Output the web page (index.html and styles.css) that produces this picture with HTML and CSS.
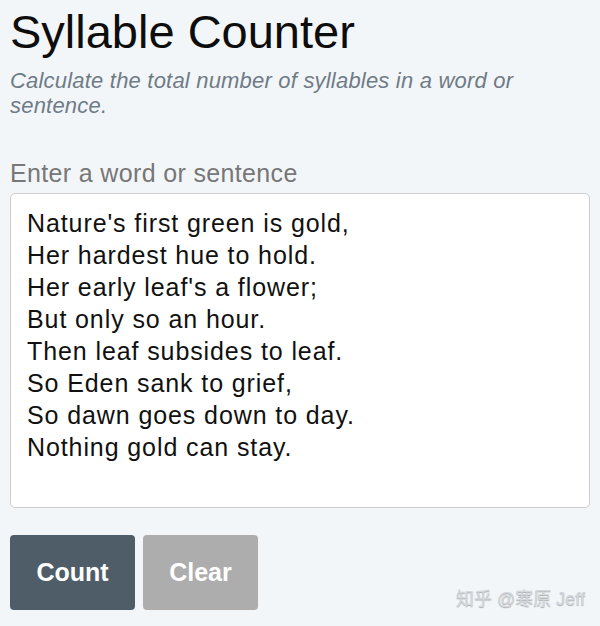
FILE: index.html
```html
<!DOCTYPE html>
<html lang="en">
<head>
  <meta charset="UTF-8" />
  <title>Syllable Counter</title>
  <link rel="stylesheet" href="styles.css">
</head>
<body>
  <div class="page">
    <h1 class="title">Syllable Counter</h1>
    <p class="subtitle">Calculate the total number of syllables in a word or sentence.</p>

    <label class="field-label" for="input">Enter a word or sentence</label>
    <textarea id="input" class="input-box">Nature's first green is gold,
Her hardest hue to hold.
Her early leaf's a flower;
But only so an hour.
Then leaf subsides to leaf.
So Eden sank to grief,
So dawn goes down to day.
Nothing gold can stay.</textarea>

    <div class="actions">
      <button class="btn btn-count">Count</button>
      <button class="btn btn-clear">Clear</button>
      <span class="watermark">知乎 @寒原 Jeff</span>
    </div>
  </div>
</body>
</html>
```

FILE: styles.css
```css
* { box-sizing: border-box; margin: 0; padding: 0; }
body {
  background: #f3f6f9;
  color: #111;
  font-family: 'Liberation Sans', Arial, sans-serif;
}
.page {
  padding: 6px 10px 0 10px;
  display: flex;
  flex-direction: column;
}
.title {
  font-size: 47px;
  font-weight: 400;
  line-height: 52px;
  color: #0d0d0d;
}
.subtitle {
  margin-top: 10px;
  font-size: 22px;
  font-style: italic;
  line-height: 25px;
  letter-spacing: 0.2px;
  color: #6f7b86;
  padding-right: 60px;
}
.field-label {
  margin-top: 41px;
  font-size: 25px;
  line-height: 28px;
  letter-spacing: 0.35px;
  color: #777;
}
.input-box {
  margin-top: 6px;
  width: 100%;
  height: 315px;
  padding: 13px 16px 10px;
  border: 1.5px solid #cfcfcf;
  border-radius: 5px;
  background: #fff;
  font-family: 'Liberation Sans', Arial, sans-serif;
  font-size: 25px;
  line-height: 32px;
  letter-spacing: 0.9px;
  color: #111;
  resize: none;
  overflow: hidden;
}
.actions {
  margin-top: 27px;
  display: flex;
  gap: 8px;
  align-items: stretch;
}
.btn {
  height: 75px;
  border: none;
  border-radius: 4px;
  color: #fff;
  font-family: 'Liberation Sans', Arial, sans-serif;
  font-size: 25px;
  font-weight: 700;
}
.btn-count { width: 125px; background: #4f5d69; }
.btn-clear { width: 115px; background: #adadad; }
.watermark {
  margin-left: auto;
  align-self: flex-end;
  margin-bottom: 0;
  margin-right: 5px;
  font-family: 'Liberation Sans', 'Noto Sans CJK SC', sans-serif;
  font-size: 18px;
  color: #d4d8dc;
  text-shadow: 0 1px 1px rgba(0,0,0,0.3);
}
```
